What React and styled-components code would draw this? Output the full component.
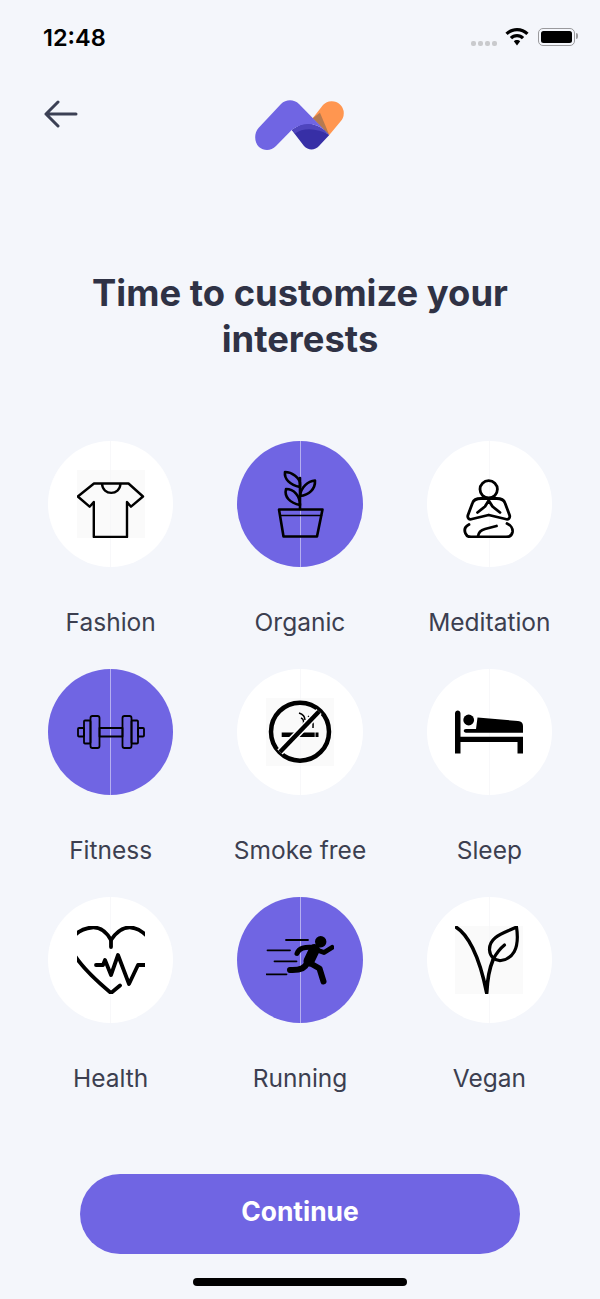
import React from "react";
import styled, { createGlobalStyle } from "styled-components";

const GlobalStyle = createGlobalStyle`
  html, body { margin: 0; padding: 0; background: #f4f6fb; }
  * { box-sizing: border-box; }
`;

const ShirtIcon = () => (
  <IconSvg viewBox="0 0 68 68" fill="none" stroke="#000" strokeWidth="2.4" strokeLinejoin="round">
    <path d="M17 13.500H51.500L66 26.500 54 36.700 50 32V67H16.800V32L12.600 36.700 0.800 26.500Z" />
    <path d="M25 13.500C25.500 26 43 26 43.500 13.500" />
  </IconSvg>
);

const PlantIcon = () => (
  <IconSvg viewBox="0 0 68 68" fill="none" stroke="#000" strokeWidth="2.6" strokeLinejoin="round" strokeLinecap="round">
    <path d="M13 39.500H56.500L51 66.500H17.500Z" />
    <path d="M14 45.500H55.500" strokeWidth="1.600" />
    <path d="M34 8V39" />
    <path d="M34 14C34 8 26 2 19 2C18 9 24 15 34 17Z" />
    <path d="M34 35C34 26 28 19 20 19C18 27 24 33 34 35Z" />
    <path d="M34 26C35 17 42 11 49 10.500C49.500 19 43 25 34 26Z" />
  </IconSvg>
);

const MeditationIcon = () => (
  <IconSvg viewBox="0 0 68 68" fill="none" stroke="#000" strokeWidth="2.800" strokeLinejoin="round" strokeLinecap="round">
    <circle cx="33.700" cy="19.300" r="8.700" />
    <path d="M26 28.500H41.500C46 28.500 49 30 50 33L54.500 45C55.500 48 53.500 50 50.500 49L33.700 45 17 49C14 50 12 48 13 45L17.500 33C18.500 30 21.500 28.500 26 28.500Z" />
    <path d="M22.500 42.500L30 36.500 33.700 30.500 37.500 36.500 45 42.500" />
    <path d="M14 54.500C10 56.500 9 60 10.500 63.500 11.500 66 13 67 16 67H51C55 67 57 65 57.500 62 58 58.500 55.500 55 52 53.500" />
    <path d="M23 66.500C23.500 62 26 60 30 59L41.500 56" />
  </IconSvg>
);

const DumbbellIcon = () => (
  <IconSvg viewBox="0 0 68 68" fill="none" stroke="#000" strokeWidth="1.800" strokeLinejoin="round">
    <rect x="1" y="30" width="6" height="8.500" rx="1" />
    <rect x="7" y="22.500" width="6.500" height="23" rx="1" />
    <rect x="13.500" y="18" width="9" height="32" rx="2" />
    <rect x="22.500" y="30" width="23" height="8.500" />
    <rect x="45.500" y="18" width="9" height="32" rx="2" />
    <rect x="54.500" y="22.500" width="6.500" height="23" rx="1" />
    <rect x="61" y="30" width="6" height="8.500" rx="1" />
  </IconSvg>
);

const NoSmokeIcon = () => (
  <IconSvg viewBox="0 0 68 68" fill="none" stroke="#000">
    <rect x="15.700" y="34.500" width="33" height="4.500" fill="#000" stroke="none" />
    <rect x="49.500" y="34.500" width="3" height="4.500" fill="#000" stroke="none" />
    <path d="M33 15C36 16 39 18 39 22M35 20C38 21 38 24 37 27M42 18C45 20 48 24 47 30" strokeWidth="1.500" />
    <circle cx="34" cy="33.700" r="29" strokeWidth="4.500" />
    <path d="M53 13.500L14 54" strokeWidth="7.500" stroke="#fff" />
    <path d="M53 13.500L14 54" strokeWidth="4.500" />
  </IconSvg>
);

const BedIcon = () => (
  <IconSvg viewBox="0 0 68 68" fill="#000">
    <path d="M0 15.500C0 11.500 5.500 11.500 5.500 15.500V38.700H68V55.500H62.500V44H5.500V55.500H0Z" />
    <circle cx="13.700" cy="22" r="5.400" />
    <path d="M22.500 19.500L63 23C66.500 23.300 68 25 68 28V34.700H11C8 34.700 8 31 11 31H21Z" />
  </IconSvg>
);

const HeartIcon = () => (
  <IconSvg viewBox="0 0 68 68" fill="none" stroke="#000" strokeWidth="3.800" strokeLinejoin="round" strokeLinecap="round">
    <path d="M34 21V14C29 5 22 1 15 1.500 8 2 3 4-2 9" />
    <path d="M-2 30C8 45 22 57 34 67L43 59.500" />
    <path d="M34 14C40 5 47 1 54 1.500 60 2 65 5 70 10" />
    <path d="M19 39H26L28 34 34 49 41 29 52 58 61 39H70" />
  </IconSvg>
);

const RunnerIcon = () => (
  <IconSvg viewBox="0 0 68 68" fill="none" stroke="#000" strokeLinecap="round" strokeLinejoin="round">
    <path d="M20 14H42M1.500 24.300H24M8.500 35.300H30.500M0.500 48.300H20.500" strokeWidth="1.800" />
    <circle cx="54.700" cy="15.700" r="5.700" fill="#000" stroke="none" />
    <path d="M31 27.500C33 22 38 20.500 49 21.500" strokeWidth="5" />
    <path d="M48.500 23.500L43 35" strokeWidth="11" />
    <path d="M51 24L58 26.500 66 21.500" strokeWidth="5" />
    <path d="M43 36.500L53.500 42.500 57.500 55.500" strokeWidth="6" />
    <path d="M41 37C39 43 33 44.500 24 44" strokeWidth="6" />
  </IconSvg>
);

const VeganIcon = () => (
  <IconSvg viewBox="0 0 68 68" fill="none" stroke="#000" strokeWidth="3.200" strokeLinejoin="round" strokeLinecap="round">
    <path d="M1.500 1.500C12 8 24 28 31.700 67 32.500 52 34.500 42 38 34" strokeWidth="3.600" />
    <path d="M61.500 1C50 7 34 10 34.500 24 35 31 40 35 46 34.500 57 33 65 24 61.500 1Z" />
    <path d="M38 33.500C41 28 44.500 23 49.500 19" />
  </IconSvg>
);

const interests = [
  { name: "Fashion", Icon: ShirtIcon, hatched: true },
  { name: "Organic", Icon: PlantIcon, selected: true },
  { name: "Meditation", Icon: MeditationIcon },
  { name: "Fitness", Icon: DumbbellIcon, selected: true },
  { name: "Smoke free", Icon: NoSmokeIcon, hatched: true },
  { name: "Sleep", Icon: BedIcon },
  { name: "Health", Icon: HeartIcon },
  { name: "Running", Icon: RunnerIcon, selected: true },
  { name: "Vegan", Icon: VeganIcon, hatched: true },
];

export default function App() {
  return (
    <Page>
      <GlobalStyle />
      <StatusBar>
        <Clock>12:48</Clock>
        <StatusIcons>
          <SignalDots>
            <i /><i /><i /><i />
          </SignalDots>
          <svg width="24" height="18" viewBox="0 0 24 18" fill="#000">
            <path d="M12 0C7.500 0 3.400 1.800 0.400 4.700L2.700 7.100C5.100 4.800 8.400 3.300 12 3.300S18.900 4.800 21.300 7.100L23.600 4.700C20.600 1.800 16.500 0 12 0Z" />
            <path d="M12 6C9.200 6 6.600 7.100 4.800 9L7.100 11.300C8.400 10.100 10.100 9.300 12 9.300S15.600 10.100 16.900 11.300L19.200 9C17.400 7.100 14.800 6 12 6Z" />
            <path d="M12 12C10.700 12 9.600 12.500 8.800 13.300L12 17.500 15.200 13.300C14.400 12.500 13.300 12 12 12Z" />
          </svg>
          <Battery>
            <BatteryFill />
          </Battery>
        </StatusIcons>
      </StatusBar>

      <Header>
        <BackButton aria-label="Back">
          <svg width="34" height="28" viewBox="0 0 34 28" fill="none" stroke="#3b4054" strokeWidth="3" strokeLinecap="round" strokeLinejoin="round">
            <path d="M32 14H2M14 2L2 14 14 26" />
          </svg>
        </BackButton>
        <svg width="90" height="50" viewBox="0 0 90 50">
          <path d="M68 5A12 12 0 0 1 85.500 21.500L74.300 35 57.700 18.300Z" fill="#ff9650" />
          <path d="M57.700 18.300L65 12.700 74.300 35Z" fill="#b57a50" />
          <path d="M36.700 30L52 21 74.300 35 64 46C60 50.500 53 50.500 49 46Z" fill="#372fa6" />
          <path d="M37 30C47 22 60 22 69.500 30L74.300 35C63 28 48 27 40 33.500Z" fill="#4f45bd" />
          <path d="M3.500 28L26 4C31 -1 39 -1 44 4L69.500 30C60 22 47 22 36.700 30L21 46C16 51 9 51 4 47-1 42-1 33 3.500 28Z" fill="#7065e3" />
        </svg>
        <span />
      </Header>

      <Title>Time to customize your interests</Title>

      <Grid>
        {interests.map(({ name, Icon, selected, hatched }) => (
          <Tile key={name}>
            <Circle $selected={selected}>
              <IconBox $hatched={hatched}>
                <Icon />
              </IconBox>
            </Circle>
            <Label>{name}</Label>
          </Tile>
        ))}
      </Grid>

      <Footer>
        <ContinueButton>Continue</ContinueButton>
        <HomeIndicator />
      </Footer>
    </Page>
  );
}

const Page = styled.div`
  width: 600px;
  height: 1299px;
  background: #f4f6fb;
  font-family: Inter, "Liberation Sans", sans-serif;
  display: flex;
  flex-direction: column;
  overflow: hidden;
`;
const StatusBar = styled.div`
  height: 74px;
  padding: 0 25px 0 43px;
  display: flex;
  align-items: center;
  justify-content: space-between;
`;
const Clock = styled.span`
  font-size: 23.5px;
  font-weight: 600;
  color: #000;
`;
const StatusIcons = styled.div`
  display: flex;
  align-items: center;
  gap: 8px;
`;
const SignalDots = styled.div`
  display: flex;
  gap: 2px;
  margin-top: 12px;
  i {
    width: 5px;
    height: 5px;
    border-radius: 2px;
    background: #c9cacd;
  }
`;
const Battery = styled.div`
  width: 37px;
  height: 18px;
  margin-left: 1px;
  padding: 2px;
  border: 1.5px solid #9a9a9d;
  border-radius: 5px;
  position: relative;
  &::after {
    content: "";
    position: absolute;
    right: -4px;
    top: 4px;
    width: 2px;
    height: 6px;
    background: #9a9a9d;
    border-radius: 0 2px 2px 0;
  }
`;
const BatteryFill = styled.div`
  width: 100%;
  height: 100%;
  background: #000;
  border-radius: 2.5px;
`;
const Header = styled.div`
  height: 50px;
  margin-top: 26px;
  padding: 0 44px;
  display: grid;
  grid-template-columns: 1fr auto 1fr;
  align-items: start;
`;
const BackButton = styled.button`
  width: 34px;
  height: 28px;
  padding: 0;
  border: 0;
  background: none;
  display: block;
`;
const Title = styled.h1`
  width: 440px;
  margin: 120px auto 0;
  font-size: 36.4px;
  line-height: 46px;
  font-weight: 700;
  color: #2f3245;
  text-align: center;
`;
const Grid = styled.div`
  margin-top: 79px;
  padding: 0 16px;
  display: grid;
  grid-template-columns: repeat(3, 1fr);
  grid-auto-rows: 228px;
`;
const Tile = styled.div`
  display: flex;
  flex-direction: column;
  align-items: center;
`;
const Circle = styled.div`
  width: 125.5px;
  height: 126px;
  border-radius: 50%;
  background: ${(p) => (p.$selected ? "#7065e3" : "#fff")};
  display: flex;
  align-items: center;
  justify-content: center;
  position: relative;
  overflow: hidden;
  &::before {
    content: "";
    position: absolute;
    left: 62.5px;
    top: 0;
    bottom: 0;
    width: 1px;
    background: ${(p) => (p.$selected ? "#b5aff0" : "#f8f8fa")};
  }
`;
const IconBox = styled.div`
  width: 68px;
  height: 68px;
  position: relative;
  background: ${(p) => (p.$hatched ? "rgba(246, 246, 246, 0.5)" : "transparent")};
`;
const IconSvg = styled.svg`
  width: 68px;
  height: 68px;
  display: block;
`;
const Label = styled.div`
  margin-top: 40px;
  font-size: 24.5px;
  line-height: 30px;
  color: #3c3f50;
`;
const Footer = styled.div`
  margin-top: auto;
  display: flex;
  flex-direction: column;
  align-items: center;
  padding-bottom: 13px;
`;
const ContinueButton = styled.button`
  width: 440px;
  height: 80px;
  padding: 0 0 6px;
  border: 0;
  border-radius: 40px;
  background: #7065e3;
  color: #fff;
  font-family: inherit;
  font-size: 26.4px;
  font-weight: 700;
`;
const HomeIndicator = styled.div`
  width: 214px;
  height: 8px;
  margin-top: 24px;
  border-radius: 4px;
  background: #000;
`;
